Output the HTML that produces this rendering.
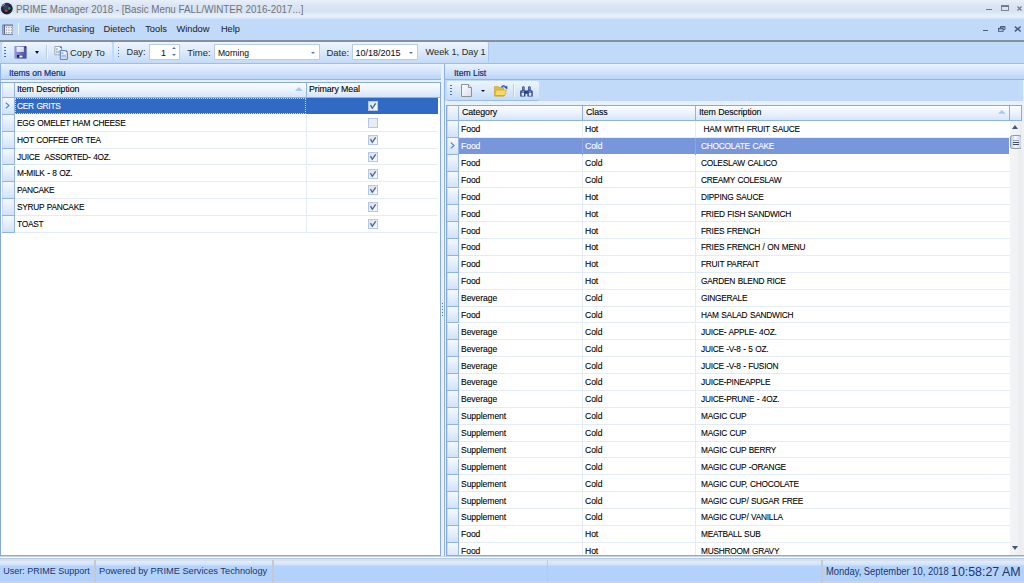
<!DOCTYPE html>
<html><head><meta charset="utf-8"><style>
*{box-sizing:border-box;margin:0;padding:0}
html,body{width:1024px;height:583px;overflow:hidden;background:#d5e4f7;font-family:"Liberation Sans",sans-serif;font-size:9px;color:#000}
.a{position:absolute}
.t{position:absolute;white-space:pre;line-height:1}
.grid .a,.grid .t,.grid .gh,.grid .rh,.grid .row{position:absolute}
#title{left:0;top:0;width:1024px;height:18px;background:linear-gradient(#e7eff9,#dbe6f4 30%,#d6e2f3 60%,#e2ecf8 80%,#e9f1fb 94%,#d4e6fb)}
#menu{left:0;top:18px;width:1024px;height:22px;background:#c1daf9;border-top:1px solid #d3e5fb}
#dark{left:0;top:40px;width:1024px;height:1.6px;background:#86909c}
#tstrip{left:0;top:41.6px;width:1024px;height:21.4px;background:#c1daf9}
.tb{background:linear-gradient(#eef5fe,#dae9fb 50%,#c3dbf8);border-bottom:1px solid #9dbde8;border-radius:2px}
.grip{position:absolute;width:1.5px;height:11.5px;background:repeating-linear-gradient(#3f72c2 0 1.4px,transparent 1.4px 3px)}
.sep{position:absolute;width:2px;border-left:1px solid #b7cde9;border-right:1px solid #f4f8fd}
.ph{background:linear-gradient(#e9f2fd,#d6e6fb 45%,#bad5f7);border-bottom:1px solid #93b5e3}
.grid{background:#fff;border:1px solid #86aadd;overflow:hidden}
.gh{background:linear-gradient(#fcfdff,#ebf3fd 50%,#d5e5fa);border-bottom:1px solid #8fb2e2}
.rh{background:linear-gradient(#f5f9fe,#e3eefb 50%,#d1e2f8);border-right:1px solid #93b6e6;box-shadow:inset 1px 0 0 #c9dcf5}
.row{height:16.84px;border-bottom:1px solid #e2ebf8}
.grid .t{font-size:9.8px;-webkit-text-stroke:0.1px currentColor}
.caps{letter-spacing:-0.3px;word-spacing:0.6px;transform:scaleX(0.85);transform-origin:0 0}
.mx{letter-spacing:-0.1px;transform:scaleX(0.88);transform-origin:0 0}

.s{-webkit-text-stroke:0.05px currentColor}
.phs{transform:scaleX(0.91);transform-origin:0 0;-webkit-text-stroke:0.2px currentColor}
.mc{transform:scaleX(0.88)}
.hd{transform:scaleX(0.9)}

</style></head><body>

<div id="title" class="a"></div>
<svg class="a" style="left:0;top:2px" width="14" height="14" viewBox="0 0 14 14">
<defs><radialGradient id="gb" cx="0.4" cy="0.35" r="0.7"><stop offset="0" stop-color="#3a4a78"/><stop offset="0.7" stop-color="#151b33"/><stop offset="1" stop-color="#2a3048"/></radialGradient></defs>
<circle cx="6.8" cy="6.6" r="5.9" fill="url(#gb)"/>
<path d="M2.6 4.2 A5 5 0 0 1 5 1.8" stroke="#c9d3ea" stroke-width="1" fill="none" opacity="0.8"/>
<circle cx="6.2" cy="8.6" r="1.5" fill="#c0302a"/><circle cx="9.3" cy="6.4" r="1.3" fill="#2f9a3a"/></svg>
<div class="t" style="left:15.7px;top:4.9px;font-size:10.3px;color:#6f747c;transform:scaleX(0.953);transform-origin:0 0">PRIME Manager 2018 - [Basic Menu FALL/WINTER 2016-2017...]</div>
<div class="a" style="left:986px;top:9px;width:6px;height:1.3px;background:#6f7b8a"></div>
<svg class="a" style="left:1000.5px;top:5.3px" width="8" height="6" viewBox="0 0 8 6"><rect x="0.5" y="0.5" width="7" height="5" fill="none" stroke="#707b88" stroke-width="0.9"/><rect x="0.5" y="0.5" width="7" height="1.5" fill="#707b88"/></svg>
<svg class="a" style="left:1016.5px;top:6px" width="5" height="5" viewBox="0 0 5 5"><path d="M0.5 0.5L4.5 4.5M4.5 0.5L0.5 4.5" stroke="#707b88" stroke-width="1.2"/></svg>
<div id="menu" class="a"></div>
<svg class="a" style="left:1.8px;top:24px" width="11.5" height="11" viewBox="0 0 11.5 11">
<rect x="0.4" y="0.5" width="10.8" height="10.2" rx="0.6" fill="#566b8e"/>
<rect x="1.1" y="1.4" width="0.9" height="8.6" fill="#a7b6cc"/>
<rect x="3" y="1.6" width="7.5" height="8.4" fill="#f3f3f1"/>
<rect x="3" y="1.3" width="7.5" height="0.9" fill="#7d8faa"/>
<g stroke="#dfe2e6" stroke-width="0.5"><path d="M3 3.45H10.5M3 6.05H10.5M3 8.75H10.5M4.45 2.2V10M6.95 2.2V10M9.55 2.2V10"/></g>
<g fill="#777"><rect x="4.0" y="3.0" width="0.9" height="0.9"/><rect x="6.5" y="3.0" width="0.9" height="0.9"/><rect x="9.1" y="3.0" width="0.9" height="0.9"/><rect x="4.0" y="5.6" width="0.9" height="0.9"/><rect x="6.5" y="5.6" width="0.9" height="0.9"/><rect x="9.1" y="5.6" width="0.9" height="0.9"/><rect x="4.0" y="8.3" width="0.9" height="0.9"/><rect x="6.5" y="8.3" width="0.9" height="0.9"/><rect x="9.1" y="8.3" width="0.9" height="0.9"/></g></svg>
<div class="a" style="left:18px;top:23px;width:1px;height:12px;background:#eef5fe"></div>
<div class="t s" style="left:24.7px;top:24.8px;font-size:9.3px;color:#262626">File</div>
<div class="t s" style="left:47.8px;top:24.8px;font-size:9.3px;color:#262626">Purchasing</div>
<div class="t s" style="left:103.6px;top:24.8px;font-size:9.3px;color:#262626">Dietech</div>
<div class="t s" style="left:145.2px;top:24.8px;font-size:9.3px;color:#262626">Tools</div>
<div class="t s" style="left:176.4px;top:24.8px;font-size:9.3px;color:#262626">Window</div>
<div class="t s" style="left:220.9px;top:24.8px;font-size:9.3px;color:#262626">Help</div>
<div class="a" style="left:983px;top:29.5px;width:5px;height:1.6px;background:#4a5d80"></div>
<svg class="a" style="left:998px;top:25.8px" width="7.5" height="5.8" viewBox="0 0 7.5 5.8"><path d="M2.5 2V0.5H7V3.5H5.3" fill="none" stroke="#4a5d80" stroke-width="1"/><rect x="2.5" y="0.4" width="4.6" height="1.1" fill="#4a5d80"/><rect x="0.5" y="2.3" width="4.6" height="3" fill="#c1daf9" stroke="#4a5d80" stroke-width="1"/><rect x="0.5" y="2.2" width="4.6" height="1.1" fill="#4a5d80"/></svg>
<svg class="a" style="left:1013.5px;top:25.5px" width="7.5" height="6" viewBox="0 0 7.5 6"><path d="M0.8 0.6L6.7 5.4M6.7 0.6L0.8 5.4" stroke="#4a5d80" stroke-width="1.5"/></svg>
<div id="dark" class="a"></div>
<div id="tstrip" class="a"></div>
<div class="a" style="left:0;top:63px;width:1024px;height:1px;background:#9dbde8"></div>
<div class="a tb" style="left:2px;top:42px;width:110px;height:21px;border-bottom:none"></div>
<div class="grip" style="left:4px;top:46.8px"></div>
<svg class="a" style="left:14px;top:45.8px" width="13" height="13" viewBox="0 0 13 13">
<defs><linearGradient id="fl" x1="0" y1="0" x2="1" y2="0"><stop offset="0" stop-color="#9a9de0"/><stop offset="0.5" stop-color="#6a6cc4"/><stop offset="1" stop-color="#4a4aa6"/></linearGradient>
<linearGradient id="lb" x1="0" y1="0" x2="1" y2="1"><stop offset="0" stop-color="#ffffff"/><stop offset="1" stop-color="#c9cbd6"/></linearGradient></defs>
<rect x="0.3" y="0" width="12.3" height="12.7" rx="0.8" fill="url(#fl)"/>
<rect x="2.6" y="0.7" width="7.3" height="5.3" fill="url(#lb)"/>
<rect x="11" y="0.8" width="1" height="1" fill="#222"/>
<rect x="3" y="9" width="6.3" height="2.8" fill="#34346e"/><rect x="5.3" y="9.5" width="3.3" height="2" fill="#eceef4"/><rect x="3.4" y="9.3" width="1.2" height="1.3" fill="#000"/></svg>
<div class="a" style="left:35px;top:51px;width:0;height:0;border-left:2.5px solid transparent;border-right:2.5px solid transparent;border-top:3px solid #111"></div>
<div class="sep" style="left:46px;top:45px;height:14px"></div>
<svg class="a" style="left:53.5px;top:45.5px" width="14" height="14" viewBox="0 0 14 14">
<path d="M0.8 0.5H5.6L7.6 2.5V8.8H0.8Z" fill="#f4f5f8" stroke="#9ca3ae" stroke-width="0.9"/>
<path d="M5.4 0.5L7.6 2.7V0.5Z" fill="#3c4a60"/>
<rect x="1.8" y="2.6" width="1.8" height="0.9" fill="#4a78c8"/><rect x="1.8" y="4.6" width="4.6" height="2.8" fill="#b9c6da"/>
<path d="M6.3 4.6H11.4L13.3 6.5V13.3H6.3Z" fill="#f2f6fd" stroke="#4d78bd" stroke-width="1"/>
<path d="M11.2 4.6L13.3 6.7V4.6Z" fill="#3f6ab8"/>
<rect x="7.4" y="6.6" width="2" height="0.9" fill="#4a78c8"/><rect x="7.4" y="8.7" width="4.8" height="2.9" fill="#a9c0e6"/></svg>
<div class="t" style="left:70px;top:47.8px;font-size:9.5px;color:#2a2a2a">Copy To</div>
<div class="a tb" style="left:114px;top:42px;width:375px;height:21px;border-bottom:none;border-right:1px solid #a9c6ec"></div>
<div class="grip" style="left:117.5px;top:46.8px"></div>
<div class="t s" style="left:126.6px;top:47.8px;font-size:9.2px;color:#2e2e2e">Day:</div>
<div class="a" style="left:148.5px;top:44px;width:31.5px;height:16px;background:#fff;border:1px solid #b9cde8"></div>
<div class="t s" style="left:161px;top:48.5px;font-size:9px;color:#111">1</div>
<div class="a" style="left:172px;top:46.8px;width:0;height:0;border-left:2.2px solid transparent;border-right:2.2px solid transparent;border-bottom:2.6px solid #4c7cc2"></div>
<div class="a" style="left:172px;top:54px;width:0;height:0;border-left:2.2px solid transparent;border-right:2.2px solid transparent;border-top:2.6px solid #4c7cc2"></div>
<div class="t s" style="left:187.3px;top:47.8px;font-size:9.5px;color:#2e2e2e">Time:</div>
<div class="a" style="left:214px;top:44px;width:105.5px;height:16px;background:#fff;border:1px solid #b9cde8"></div>
<div class="t s" style="left:217.8px;top:48.6px;font-size:9px;color:#111;transform:scaleX(0.95);transform-origin:0 0">Morning</div>
<div class="a" style="left:311.3px;top:51.5px;width:0;height:0;border-left:2.3px solid transparent;border-right:2.3px solid transparent;border-top:2.6px solid #4c7cc2"></div>
<div class="t s" style="left:326.4px;top:47.8px;font-size:9.5px;color:#2e2e2e">Date:</div>
<div class="a" style="left:352px;top:44px;width:65.5px;height:16px;background:#fff;border:1px solid #b9cde8"></div>
<div class="t s" style="left:355.5px;top:48.6px;font-size:9px;color:#111">10/18/2015</div>
<div class="a" style="left:409.3px;top:51.5px;width:0;height:0;border-left:2.3px solid transparent;border-right:2.3px solid transparent;border-top:2.6px solid #4c7cc2"></div>
<div class="t s" style="left:425.6px;top:47.8px;font-size:9.2px;color:#2e2e2e">Week 1, Day 1</div>
<div class="a" style="left:0;top:64px;width:441px;height:493px;border-left:1px solid #8fb2e2;background:#e8f0fb"></div>
<div class="a ph" style="left:1px;top:64px;width:440px;height:16px"></div>
<div class="t phs" style="left:9.3px;top:67.6px;font-size:9.4px;color:#10297a">Items on Menu</div>
<div class="a grid" style="left:0;top:82px;width:441px;height:474px">
<div class="a" style="left:1px;top:0;width:438px;height:472px">
<div class="gh" style="left:0;top:0;width:438px;height:15px"></div>
<div class="rh" style="left:0;top:0;width:13px;height:15px;background:linear-gradient(#f5f9fe,#dae7f8);border-bottom:1px solid #8fb2e2"></div>
<div class="a" style="left:303.8px;top:0;width:1px;height:15px;background:#8fb2e2"></div>
<div class="t mx hd" style="left:15.3px;top:0.6px;color:#000">Item Description</div>
<svg class="a" style="left:293.4px;top:3.9px" width="8" height="4" viewBox="0 0 8 4"><path d="M0 4L3.9 0L7.8 4Z" fill="#a2cbf6"/></svg>
<div class="t mx hd" style="left:306.6px;top:0.6px;color:#000">Primary Meal</div>
<div class="rh" style="left:0;top:15.00px;width:13px;height:16.88px;border-bottom:1px solid #8fb3e4"></div>
<div class="a" style="left:13px;top:15.00px;width:423px;height:16.07px;background:#316ac5"></div>
<div class="a" style="left:13px;top:15.00px;width:291px;height:16.07px;border:1px dotted #c8d8f0"></div>
<svg class="a" style="left:3.4px;top:18.90px" width="5" height="7" viewBox="0 0 5 7"><path d="M0.8 0.6L4 3.5L0.8 6.4" stroke="#4b86d6" stroke-width="1.2" fill="none"/></svg>
<div class="t caps" style="left:14.8px;top:17.90px;color:#fff">CER GRITS</div>
<svg class="a" style="left:366px;top:18.00px" width="10" height="10" viewBox="0 0 10 10"><defs><linearGradient id="cbg" x1="0" y1="0" x2="1" y2="1"><stop offset="0" stop-color="#d9dfe7"/><stop offset="1" stop-color="#fbfcfd"/></linearGradient></defs><rect x="0.5" y="0.5" width="9" height="9" fill="url(#cbg)" stroke="#b3c8e6"/><path d="M2.5 4.2L4.3 7.3L7.7 2.4" stroke="#4668a6" stroke-width="1.4" fill="none"/></svg>
<div class="rh" style="left:0;top:31.88px;width:13px;height:16.88px;border-bottom:1px solid #8fb3e4"></div>
<div class="row" style="left:13px;top:31.88px;width:423px"></div>
<div class="a" style="left:303.8px;top:31.88px;width:1px;height:16.88px;background:#e2ebf8"></div>
<div class="t caps" style="left:14.8px;top:34.77px;color:#000">EGG OMELET HAM CHEESE</div>
<svg class="a" style="left:366px;top:34.88px" width="10" height="10" viewBox="0 0 10 10"><rect x="0.5" y="0.5" width="9" height="9" fill="#e9ecf0" stroke="#b3c8e6"/></svg>
<div class="rh" style="left:0;top:48.75px;width:13px;height:16.88px;border-bottom:1px solid #8fb3e4"></div>
<div class="row" style="left:13px;top:48.75px;width:423px"></div>
<div class="a" style="left:303.8px;top:48.75px;width:1px;height:16.88px;background:#e2ebf8"></div>
<div class="t caps" style="left:14.8px;top:51.65px;color:#000">HOT COFFEE OR TEA</div>
<svg class="a" style="left:366px;top:51.75px" width="10" height="10" viewBox="0 0 10 10"><defs><linearGradient id="cbg" x1="0" y1="0" x2="1" y2="1"><stop offset="0" stop-color="#d9dfe7"/><stop offset="1" stop-color="#fbfcfd"/></linearGradient></defs><rect x="0.5" y="0.5" width="9" height="9" fill="url(#cbg)" stroke="#b3c8e6"/><path d="M2.5 4.2L4.3 7.3L7.7 2.4" stroke="#4668a6" stroke-width="1.4" fill="none"/></svg>
<div class="rh" style="left:0;top:65.62px;width:13px;height:16.88px;border-bottom:1px solid #8fb3e4"></div>
<div class="row" style="left:13px;top:65.62px;width:423px"></div>
<div class="a" style="left:303.8px;top:65.62px;width:1px;height:16.88px;background:#e2ebf8"></div>
<div class="t caps" style="left:14.8px;top:68.53px;color:#000">JUICE  ASSORTED- 4OZ.</div>
<svg class="a" style="left:366px;top:68.62px" width="10" height="10" viewBox="0 0 10 10"><defs><linearGradient id="cbg" x1="0" y1="0" x2="1" y2="1"><stop offset="0" stop-color="#d9dfe7"/><stop offset="1" stop-color="#fbfcfd"/></linearGradient></defs><rect x="0.5" y="0.5" width="9" height="9" fill="url(#cbg)" stroke="#b3c8e6"/><path d="M2.5 4.2L4.3 7.3L7.7 2.4" stroke="#4668a6" stroke-width="1.4" fill="none"/></svg>
<div class="rh" style="left:0;top:82.50px;width:13px;height:16.88px;border-bottom:1px solid #8fb3e4"></div>
<div class="row" style="left:13px;top:82.50px;width:423px"></div>
<div class="a" style="left:303.8px;top:82.50px;width:1px;height:16.88px;background:#e2ebf8"></div>
<div class="t caps" style="left:14.8px;top:85.40px;color:#000">M-MILK - 8 OZ.</div>
<svg class="a" style="left:366px;top:85.50px" width="10" height="10" viewBox="0 0 10 10"><defs><linearGradient id="cbg" x1="0" y1="0" x2="1" y2="1"><stop offset="0" stop-color="#d9dfe7"/><stop offset="1" stop-color="#fbfcfd"/></linearGradient></defs><rect x="0.5" y="0.5" width="9" height="9" fill="url(#cbg)" stroke="#b3c8e6"/><path d="M2.5 4.2L4.3 7.3L7.7 2.4" stroke="#4668a6" stroke-width="1.4" fill="none"/></svg>
<div class="rh" style="left:0;top:99.38px;width:13px;height:16.88px;border-bottom:1px solid #8fb3e4"></div>
<div class="row" style="left:13px;top:99.38px;width:423px"></div>
<div class="a" style="left:303.8px;top:99.38px;width:1px;height:16.88px;background:#e2ebf8"></div>
<div class="t caps" style="left:14.8px;top:102.28px;color:#000">PANCAKE</div>
<svg class="a" style="left:366px;top:102.38px" width="10" height="10" viewBox="0 0 10 10"><defs><linearGradient id="cbg" x1="0" y1="0" x2="1" y2="1"><stop offset="0" stop-color="#d9dfe7"/><stop offset="1" stop-color="#fbfcfd"/></linearGradient></defs><rect x="0.5" y="0.5" width="9" height="9" fill="url(#cbg)" stroke="#b3c8e6"/><path d="M2.5 4.2L4.3 7.3L7.7 2.4" stroke="#4668a6" stroke-width="1.4" fill="none"/></svg>
<div class="rh" style="left:0;top:116.25px;width:13px;height:16.88px;border-bottom:1px solid #8fb3e4"></div>
<div class="row" style="left:13px;top:116.25px;width:423px"></div>
<div class="a" style="left:303.8px;top:116.25px;width:1px;height:16.88px;background:#e2ebf8"></div>
<div class="t caps" style="left:14.8px;top:119.15px;color:#000">SYRUP PANCAKE</div>
<svg class="a" style="left:366px;top:119.25px" width="10" height="10" viewBox="0 0 10 10"><defs><linearGradient id="cbg" x1="0" y1="0" x2="1" y2="1"><stop offset="0" stop-color="#d9dfe7"/><stop offset="1" stop-color="#fbfcfd"/></linearGradient></defs><rect x="0.5" y="0.5" width="9" height="9" fill="url(#cbg)" stroke="#b3c8e6"/><path d="M2.5 4.2L4.3 7.3L7.7 2.4" stroke="#4668a6" stroke-width="1.4" fill="none"/></svg>
<div class="rh" style="left:0;top:133.12px;width:13px;height:16.88px;border-bottom:1px solid #8fb3e4"></div>
<div class="row" style="left:13px;top:133.12px;width:423px"></div>
<div class="a" style="left:303.8px;top:133.12px;width:1px;height:16.88px;background:#e2ebf8"></div>
<div class="t caps" style="left:14.8px;top:136.03px;color:#000">TOAST</div>
<svg class="a" style="left:366px;top:136.12px" width="10" height="10" viewBox="0 0 10 10"><defs><linearGradient id="cbg" x1="0" y1="0" x2="1" y2="1"><stop offset="0" stop-color="#d9dfe7"/><stop offset="1" stop-color="#fbfcfd"/></linearGradient></defs><rect x="0.5" y="0.5" width="9" height="9" fill="url(#cbg)" stroke="#b3c8e6"/><path d="M2.5 4.2L4.3 7.3L7.7 2.4" stroke="#4668a6" stroke-width="1.4" fill="none"/></svg>
</div>
</div>
<div class="a" style="left:444px;top:64px;width:580px;height:493px;border-left:1px solid #8fb2e2;background:#e8f0fb"></div>
<div class="a ph" style="left:445px;top:64px;width:579px;height:16px"></div>
<div class="t phs" style="left:453.6px;top:67.6px;font-size:9.4px;color:#10297a">Item List</div>
<div class="a" style="left:445px;top:80px;width:578px;height:21px;background:#c1daf9"></div>
<div class="a tb" style="left:447px;top:81px;width:92px;height:20px"></div>
<div class="grip" style="left:450.2px;top:85.3px"></div>
<svg class="a" style="left:461px;top:84px" width="11" height="13" viewBox="0 0 11 13"><defs><linearGradient id="pg" x1="0" y1="0" x2="1" y2="1"><stop offset="0" stop-color="#ffffff"/><stop offset="1" stop-color="#d9dde5"/></linearGradient></defs><path d="M0.5 0.5H7.5L10.5 3.5V12.5H0.5Z" fill="url(#pg)" stroke="#8a929e"/><path d="M7.5 0.5V3.5H10.5" fill="#e8ebf0" stroke="#8a929e"/></svg>
<div class="a" style="left:481px;top:89.5px;width:0;height:0;border-left:2.3px solid transparent;border-right:2.3px solid transparent;border-top:2.8px solid #111"></div>
<svg class="a" style="left:493.5px;top:84.5px" width="14" height="12" viewBox="0 0 14 12">
<path d="M0.5 1.6H4.2L5 2.6H9.6V11H0.5Z" fill="#e3bd3c" stroke="#c89b2a" stroke-width="0.6"/>
<path d="M2.2 5H12.6L10.4 11H0.6Z" fill="#f6d865" stroke="#cf9e22" stroke-width="0.6"/>
<path d="M1 10.3H10.6L10.3 11H0.8Z" fill="#d29d1c"/>
<path d="M7.6 2.4Q8.8 0 11.6 1.6" stroke="#2456b8" stroke-width="1.3" fill="none"/>
<path d="M10.2 2.8L13.4 4.2L13.2 0.6Z" fill="#2456b8"/></svg>
<div class="sep" style="left:513px;top:84px;height:13px"></div>
<svg class="a" style="left:520px;top:85.6px" width="13" height="11" viewBox="0 0 13 11">
<g fill="#223f8a"><path d="M2.2 4.4V1.5Q2.2 0.3 3.3 0.3Q4.6 0.3 4.6 1.5V4.4Z"/><path d="M8.2 4.4V1.5Q8.2 0.3 9.4 0.3Q10.7 0.3 10.7 1.5V4.4Z"/>
<path d="M0.2 10.6V5.6Q0.2 4.2 1.6 4.2H5.4V10.6Z"/><path d="M7.4 4.2H11.2Q12.7 4.2 12.7 5.6V10.6H7.4Z"/><rect x="5" y="4.6" width="2.8" height="3.2"/></g>
<g fill="#dfe8f6"><rect x="1.5" y="6.6" width="2.6" height="3.2"/><rect x="8.8" y="6.6" width="2.6" height="3.2"/></g>
<g fill="#8aa6da"><rect x="2.9" y="1.2" width="0.8" height="2.4"/><rect x="9" y="1.2" width="0.8" height="2.4"/><rect x="1.6" y="4.9" width="2.8" height="0.8"/><rect x="8.6" y="4.9" width="2.8" height="0.8"/></g></svg>
<div class="a grid" style="left:446px;top:105px;width:576px;height:451px">
<div class="gh" style="left:0;top:0;width:574px;height:15px"></div>
<div class="rh" style="left:0;top:0;width:12px;height:15px;background:linear-gradient(#f5f9fe,#dae7f8);border-bottom:1px solid #8fb2e2"></div>
<div class="a" style="left:135.2px;top:0;width:1px;height:15px;background:#8fb2e2"></div>
<div class="a" style="left:248.2px;top:0;width:1px;height:15px;background:#8fb2e2"></div>
<div class="a" style="left:562.2px;top:0;width:1px;height:15px;background:#8fb2e2"></div>
<div class="t mx hd" style="left:14.6px;top:1.1px;color:#000">Category</div>
<div class="t mx hd" style="left:138.6px;top:1.1px;color:#000">Class</div>
<div class="t mx hd" style="left:251.8px;top:1.1px;color:#000">Item Description</div>
<svg class="a" style="left:551px;top:4.3px" width="8" height="4" viewBox="0 0 8 4"><path d="M0 3.8L3.9 0L7.8 3.8Z" fill="#a2cbf6"/></svg>
<div class="rh" style="left:0;top:15.00px;width:12px;height:16.88px;border-bottom:1px solid #8fb3e4"></div>
<div class="row" style="left:12px;top:15.00px;width:551px"></div>
<div class="a" style="left:135.2px;top:15.00px;width:1px;height:16.88px;background:#e2ebf8"></div>
<div class="a" style="left:248.2px;top:15.00px;width:1px;height:16.88px;background:#e2ebf8"></div>
<div class="t mx mc" style="left:14.3px;top:18.30px;color:#000">Food</div>
<div class="t mx mc" style="left:138.3px;top:18.30px;color:#000">Hot</div>
<div class="t caps" style="left:254px;top:18.30px;color:#000"> HAM WITH FRUIT SAUCE</div>
<div class="rh" style="left:0;top:31.88px;width:12px;height:16.88px;border-bottom:1px solid #8fb3e4"></div>
<div class="a" style="left:12px;top:31.88px;width:550.2px;height:16.07px;background:#7896dc"></div>
<svg class="a" style="left:3.2px;top:35.77px" width="5" height="7" viewBox="0 0 5 7"><path d="M0.8 0.6L4 3.5L0.8 6.4" stroke="#4b86d6" stroke-width="1.2" fill="none"/></svg>
<div class="a" style="left:135.2px;top:31.88px;width:1px;height:16.88px;background:#8aa5e2"></div>
<div class="a" style="left:248.2px;top:31.88px;width:1px;height:16.88px;background:#8aa5e2"></div>
<div class="t mx mc" style="left:14.3px;top:35.17px;color:#fff">Food</div>
<div class="t mx mc" style="left:138.3px;top:35.17px;color:#fff">Cold</div>
<div class="t caps" style="left:254px;top:35.17px;color:#fff">CHOCOLATE CAKE</div>
<div class="rh" style="left:0;top:48.75px;width:12px;height:16.88px;border-bottom:1px solid #8fb3e4"></div>
<div class="row" style="left:12px;top:48.75px;width:551px"></div>
<div class="a" style="left:135.2px;top:48.75px;width:1px;height:16.88px;background:#e2ebf8"></div>
<div class="a" style="left:248.2px;top:48.75px;width:1px;height:16.88px;background:#e2ebf8"></div>
<div class="t mx mc" style="left:14.3px;top:52.05px;color:#000">Food</div>
<div class="t mx mc" style="left:138.3px;top:52.05px;color:#000">Cold</div>
<div class="t caps" style="left:254px;top:52.05px;color:#000">COLESLAW CALICO</div>
<div class="rh" style="left:0;top:65.62px;width:12px;height:16.88px;border-bottom:1px solid #8fb3e4"></div>
<div class="row" style="left:12px;top:65.62px;width:551px"></div>
<div class="a" style="left:135.2px;top:65.62px;width:1px;height:16.88px;background:#e2ebf8"></div>
<div class="a" style="left:248.2px;top:65.62px;width:1px;height:16.88px;background:#e2ebf8"></div>
<div class="t mx mc" style="left:14.3px;top:68.92px;color:#000">Food</div>
<div class="t mx mc" style="left:138.3px;top:68.92px;color:#000">Cold</div>
<div class="t caps" style="left:254px;top:68.92px;color:#000">CREAMY COLESLAW</div>
<div class="rh" style="left:0;top:82.50px;width:12px;height:16.88px;border-bottom:1px solid #8fb3e4"></div>
<div class="row" style="left:12px;top:82.50px;width:551px"></div>
<div class="a" style="left:135.2px;top:82.50px;width:1px;height:16.88px;background:#e2ebf8"></div>
<div class="a" style="left:248.2px;top:82.50px;width:1px;height:16.88px;background:#e2ebf8"></div>
<div class="t mx mc" style="left:14.3px;top:85.80px;color:#000">Food</div>
<div class="t mx mc" style="left:138.3px;top:85.80px;color:#000">Hot</div>
<div class="t caps" style="left:254px;top:85.80px;color:#000">DIPPING SAUCE</div>
<div class="rh" style="left:0;top:99.38px;width:12px;height:16.88px;border-bottom:1px solid #8fb3e4"></div>
<div class="row" style="left:12px;top:99.38px;width:551px"></div>
<div class="a" style="left:135.2px;top:99.38px;width:1px;height:16.88px;background:#e2ebf8"></div>
<div class="a" style="left:248.2px;top:99.38px;width:1px;height:16.88px;background:#e2ebf8"></div>
<div class="t mx mc" style="left:14.3px;top:102.67px;color:#000">Food</div>
<div class="t mx mc" style="left:138.3px;top:102.67px;color:#000">Hot</div>
<div class="t caps" style="left:254px;top:102.67px;color:#000">FRIED FISH SANDWICH</div>
<div class="rh" style="left:0;top:116.25px;width:12px;height:16.88px;border-bottom:1px solid #8fb3e4"></div>
<div class="row" style="left:12px;top:116.25px;width:551px"></div>
<div class="a" style="left:135.2px;top:116.25px;width:1px;height:16.88px;background:#e2ebf8"></div>
<div class="a" style="left:248.2px;top:116.25px;width:1px;height:16.88px;background:#e2ebf8"></div>
<div class="t mx mc" style="left:14.3px;top:119.55px;color:#000">Food</div>
<div class="t mx mc" style="left:138.3px;top:119.55px;color:#000">Hot</div>
<div class="t caps" style="left:254px;top:119.55px;color:#000">FRIES FRENCH</div>
<div class="rh" style="left:0;top:133.12px;width:12px;height:16.88px;border-bottom:1px solid #8fb3e4"></div>
<div class="row" style="left:12px;top:133.12px;width:551px"></div>
<div class="a" style="left:135.2px;top:133.12px;width:1px;height:16.88px;background:#e2ebf8"></div>
<div class="a" style="left:248.2px;top:133.12px;width:1px;height:16.88px;background:#e2ebf8"></div>
<div class="t mx mc" style="left:14.3px;top:136.43px;color:#000">Food</div>
<div class="t mx mc" style="left:138.3px;top:136.43px;color:#000">Hot</div>
<div class="t caps" style="left:254px;top:136.43px;color:#000">FRIES FRENCH / ON MENU</div>
<div class="rh" style="left:0;top:150.00px;width:12px;height:16.88px;border-bottom:1px solid #8fb3e4"></div>
<div class="row" style="left:12px;top:150.00px;width:551px"></div>
<div class="a" style="left:135.2px;top:150.00px;width:1px;height:16.88px;background:#e2ebf8"></div>
<div class="a" style="left:248.2px;top:150.00px;width:1px;height:16.88px;background:#e2ebf8"></div>
<div class="t mx mc" style="left:14.3px;top:153.30px;color:#000">Food</div>
<div class="t mx mc" style="left:138.3px;top:153.30px;color:#000">Hot</div>
<div class="t caps" style="left:254px;top:153.30px;color:#000">FRUIT PARFAIT</div>
<div class="rh" style="left:0;top:166.88px;width:12px;height:16.88px;border-bottom:1px solid #8fb3e4"></div>
<div class="row" style="left:12px;top:166.88px;width:551px"></div>
<div class="a" style="left:135.2px;top:166.88px;width:1px;height:16.88px;background:#e2ebf8"></div>
<div class="a" style="left:248.2px;top:166.88px;width:1px;height:16.88px;background:#e2ebf8"></div>
<div class="t mx mc" style="left:14.3px;top:170.18px;color:#000">Food</div>
<div class="t mx mc" style="left:138.3px;top:170.18px;color:#000">Hot</div>
<div class="t caps" style="left:254px;top:170.18px;color:#000">GARDEN BLEND RICE</div>
<div class="rh" style="left:0;top:183.75px;width:12px;height:16.88px;border-bottom:1px solid #8fb3e4"></div>
<div class="row" style="left:12px;top:183.75px;width:551px"></div>
<div class="a" style="left:135.2px;top:183.75px;width:1px;height:16.88px;background:#e2ebf8"></div>
<div class="a" style="left:248.2px;top:183.75px;width:1px;height:16.88px;background:#e2ebf8"></div>
<div class="t mx mc" style="left:14.3px;top:187.05px;color:#000">Beverage</div>
<div class="t mx mc" style="left:138.3px;top:187.05px;color:#000">Cold</div>
<div class="t caps" style="left:254px;top:187.05px;color:#000">GINGERALE</div>
<div class="rh" style="left:0;top:200.62px;width:12px;height:16.88px;border-bottom:1px solid #8fb3e4"></div>
<div class="row" style="left:12px;top:200.62px;width:551px"></div>
<div class="a" style="left:135.2px;top:200.62px;width:1px;height:16.88px;background:#e2ebf8"></div>
<div class="a" style="left:248.2px;top:200.62px;width:1px;height:16.88px;background:#e2ebf8"></div>
<div class="t mx mc" style="left:14.3px;top:203.93px;color:#000">Food</div>
<div class="t mx mc" style="left:138.3px;top:203.93px;color:#000">Cold</div>
<div class="t caps" style="left:254px;top:203.93px;color:#000">HAM SALAD SANDWICH</div>
<div class="rh" style="left:0;top:217.50px;width:12px;height:16.88px;border-bottom:1px solid #8fb3e4"></div>
<div class="row" style="left:12px;top:217.50px;width:551px"></div>
<div class="a" style="left:135.2px;top:217.50px;width:1px;height:16.88px;background:#e2ebf8"></div>
<div class="a" style="left:248.2px;top:217.50px;width:1px;height:16.88px;background:#e2ebf8"></div>
<div class="t mx mc" style="left:14.3px;top:220.80px;color:#000">Beverage</div>
<div class="t mx mc" style="left:138.3px;top:220.80px;color:#000">Cold</div>
<div class="t caps" style="left:254px;top:220.80px;color:#000">JUICE- APPLE- 4OZ.</div>
<div class="rh" style="left:0;top:234.38px;width:12px;height:16.88px;border-bottom:1px solid #8fb3e4"></div>
<div class="row" style="left:12px;top:234.38px;width:551px"></div>
<div class="a" style="left:135.2px;top:234.38px;width:1px;height:16.88px;background:#e2ebf8"></div>
<div class="a" style="left:248.2px;top:234.38px;width:1px;height:16.88px;background:#e2ebf8"></div>
<div class="t mx mc" style="left:14.3px;top:237.68px;color:#000">Beverage</div>
<div class="t mx mc" style="left:138.3px;top:237.68px;color:#000">Cold</div>
<div class="t caps" style="left:254px;top:237.68px;color:#000">JUICE -V-8 - 5 OZ.</div>
<div class="rh" style="left:0;top:251.25px;width:12px;height:16.88px;border-bottom:1px solid #8fb3e4"></div>
<div class="row" style="left:12px;top:251.25px;width:551px"></div>
<div class="a" style="left:135.2px;top:251.25px;width:1px;height:16.88px;background:#e2ebf8"></div>
<div class="a" style="left:248.2px;top:251.25px;width:1px;height:16.88px;background:#e2ebf8"></div>
<div class="t mx mc" style="left:14.3px;top:254.55px;color:#000">Beverage</div>
<div class="t mx mc" style="left:138.3px;top:254.55px;color:#000">Cold</div>
<div class="t caps" style="left:254px;top:254.55px;color:#000">JUICE -V-8 - FUSION</div>
<div class="rh" style="left:0;top:268.12px;width:12px;height:16.88px;border-bottom:1px solid #8fb3e4"></div>
<div class="row" style="left:12px;top:268.12px;width:551px"></div>
<div class="a" style="left:135.2px;top:268.12px;width:1px;height:16.88px;background:#e2ebf8"></div>
<div class="a" style="left:248.2px;top:268.12px;width:1px;height:16.88px;background:#e2ebf8"></div>
<div class="t mx mc" style="left:14.3px;top:271.43px;color:#000">Beverage</div>
<div class="t mx mc" style="left:138.3px;top:271.43px;color:#000">Cold</div>
<div class="t caps" style="left:254px;top:271.43px;color:#000">JUICE-PINEAPPLE</div>
<div class="rh" style="left:0;top:285.00px;width:12px;height:16.88px;border-bottom:1px solid #8fb3e4"></div>
<div class="row" style="left:12px;top:285.00px;width:551px"></div>
<div class="a" style="left:135.2px;top:285.00px;width:1px;height:16.88px;background:#e2ebf8"></div>
<div class="a" style="left:248.2px;top:285.00px;width:1px;height:16.88px;background:#e2ebf8"></div>
<div class="t mx mc" style="left:14.3px;top:288.30px;color:#000">Beverage</div>
<div class="t mx mc" style="left:138.3px;top:288.30px;color:#000">Cold</div>
<div class="t caps" style="left:254px;top:288.30px;color:#000">JUICE-PRUNE - 4OZ.</div>
<div class="rh" style="left:0;top:301.88px;width:12px;height:16.88px;border-bottom:1px solid #8fb3e4"></div>
<div class="row" style="left:12px;top:301.88px;width:551px"></div>
<div class="a" style="left:135.2px;top:301.88px;width:1px;height:16.88px;background:#e2ebf8"></div>
<div class="a" style="left:248.2px;top:301.88px;width:1px;height:16.88px;background:#e2ebf8"></div>
<div class="t mx mc" style="left:14.3px;top:305.18px;color:#000">Supplement</div>
<div class="t mx mc" style="left:138.3px;top:305.18px;color:#000">Cold</div>
<div class="t caps" style="left:254px;top:305.18px;color:#000">MAGIC CUP</div>
<div class="rh" style="left:0;top:318.75px;width:12px;height:16.88px;border-bottom:1px solid #8fb3e4"></div>
<div class="row" style="left:12px;top:318.75px;width:551px"></div>
<div class="a" style="left:135.2px;top:318.75px;width:1px;height:16.88px;background:#e2ebf8"></div>
<div class="a" style="left:248.2px;top:318.75px;width:1px;height:16.88px;background:#e2ebf8"></div>
<div class="t mx mc" style="left:14.3px;top:322.05px;color:#000">Supplement</div>
<div class="t mx mc" style="left:138.3px;top:322.05px;color:#000">Cold</div>
<div class="t caps" style="left:254px;top:322.05px;color:#000">MAGIC CUP</div>
<div class="rh" style="left:0;top:335.62px;width:12px;height:16.88px;border-bottom:1px solid #8fb3e4"></div>
<div class="row" style="left:12px;top:335.62px;width:551px"></div>
<div class="a" style="left:135.2px;top:335.62px;width:1px;height:16.88px;background:#e2ebf8"></div>
<div class="a" style="left:248.2px;top:335.62px;width:1px;height:16.88px;background:#e2ebf8"></div>
<div class="t mx mc" style="left:14.3px;top:338.93px;color:#000">Supplement</div>
<div class="t mx mc" style="left:138.3px;top:338.93px;color:#000">Cold</div>
<div class="t caps" style="left:254px;top:338.93px;color:#000">MAGIC CUP BERRY</div>
<div class="rh" style="left:0;top:352.50px;width:12px;height:16.88px;border-bottom:1px solid #8fb3e4"></div>
<div class="row" style="left:12px;top:352.50px;width:551px"></div>
<div class="a" style="left:135.2px;top:352.50px;width:1px;height:16.88px;background:#e2ebf8"></div>
<div class="a" style="left:248.2px;top:352.50px;width:1px;height:16.88px;background:#e2ebf8"></div>
<div class="t mx mc" style="left:14.3px;top:355.80px;color:#000">Supplement</div>
<div class="t mx mc" style="left:138.3px;top:355.80px;color:#000">Cold</div>
<div class="t caps" style="left:254px;top:355.80px;color:#000">MAGIC CUP -ORANGE</div>
<div class="rh" style="left:0;top:369.38px;width:12px;height:16.88px;border-bottom:1px solid #8fb3e4"></div>
<div class="row" style="left:12px;top:369.38px;width:551px"></div>
<div class="a" style="left:135.2px;top:369.38px;width:1px;height:16.88px;background:#e2ebf8"></div>
<div class="a" style="left:248.2px;top:369.38px;width:1px;height:16.88px;background:#e2ebf8"></div>
<div class="t mx mc" style="left:14.3px;top:372.68px;color:#000">Supplement</div>
<div class="t mx mc" style="left:138.3px;top:372.68px;color:#000">Cold</div>
<div class="t caps" style="left:254px;top:372.68px;color:#000">MAGIC CUP, CHOCOLATE</div>
<div class="rh" style="left:0;top:386.25px;width:12px;height:16.88px;border-bottom:1px solid #8fb3e4"></div>
<div class="row" style="left:12px;top:386.25px;width:551px"></div>
<div class="a" style="left:135.2px;top:386.25px;width:1px;height:16.88px;background:#e2ebf8"></div>
<div class="a" style="left:248.2px;top:386.25px;width:1px;height:16.88px;background:#e2ebf8"></div>
<div class="t mx mc" style="left:14.3px;top:389.55px;color:#000">Supplement</div>
<div class="t mx mc" style="left:138.3px;top:389.55px;color:#000">Cold</div>
<div class="t caps" style="left:254px;top:389.55px;color:#000">MAGIC CUP/ SUGAR FREE</div>
<div class="rh" style="left:0;top:403.12px;width:12px;height:16.88px;border-bottom:1px solid #8fb3e4"></div>
<div class="row" style="left:12px;top:403.12px;width:551px"></div>
<div class="a" style="left:135.2px;top:403.12px;width:1px;height:16.88px;background:#e2ebf8"></div>
<div class="a" style="left:248.2px;top:403.12px;width:1px;height:16.88px;background:#e2ebf8"></div>
<div class="t mx mc" style="left:14.3px;top:406.43px;color:#000">Supplement</div>
<div class="t mx mc" style="left:138.3px;top:406.43px;color:#000">Cold</div>
<div class="t caps" style="left:254px;top:406.43px;color:#000">MAGIC CUP/ VANILLA</div>
<div class="rh" style="left:0;top:420.00px;width:12px;height:16.88px;border-bottom:1px solid #8fb3e4"></div>
<div class="row" style="left:12px;top:420.00px;width:551px"></div>
<div class="a" style="left:135.2px;top:420.00px;width:1px;height:16.88px;background:#e2ebf8"></div>
<div class="a" style="left:248.2px;top:420.00px;width:1px;height:16.88px;background:#e2ebf8"></div>
<div class="t mx mc" style="left:14.3px;top:423.30px;color:#000">Food</div>
<div class="t mx mc" style="left:138.3px;top:423.30px;color:#000">Hot</div>
<div class="t caps" style="left:254px;top:423.30px;color:#000">MEATBALL SUB</div>
<div class="rh" style="left:0;top:436.88px;width:12px;height:16.88px;border-bottom:1px solid #8fb3e4"></div>
<div class="row" style="left:12px;top:436.88px;width:551px"></div>
<div class="a" style="left:135.2px;top:436.88px;width:1px;height:16.88px;background:#e2ebf8"></div>
<div class="a" style="left:248.2px;top:436.88px;width:1px;height:16.88px;background:#e2ebf8"></div>
<div class="t mx mc" style="left:14.3px;top:440.18px;color:#000">Food</div>
<div class="t mx mc" style="left:138.3px;top:440.18px;color:#000">Hot</div>
<div class="t caps" style="left:254px;top:440.18px;color:#000">MUSHROOM GRAVY</div>
<div class="a" style="left:562.5px;top:15px;width:12.5px;height:436px;background:linear-gradient(90deg,#f3f4f6,#f1f2f4 50%,#e9ebee)"></div>
<div class="a" style="left:564.7px;top:19px;width:0;height:0;border-left:3.8px solid transparent;border-right:3.8px solid transparent;border-bottom:4.4px solid #46567a"></div>
<div class="a" style="left:562.5px;top:29px;width:12.5px;height:13.8px;border:1px solid #8d9aad;border-radius:2.5px;background:linear-gradient(90deg,#bfcad9,#f4f6f9 45%,#e9edf2 60%,#c9d2de)"></div>
<div class="a" style="left:566px;top:33.5px;width:5.5px;height:1px;background:#9aa6b8"></div>
<div class="a" style="left:566px;top:36px;width:5.5px;height:1px;background:#3f4c63"></div>
<div class="a" style="left:566px;top:38px;width:5.5px;height:1px;background:#3f4c63"></div>
<div class="a" style="left:565.2px;top:440px;width:0;height:0;border-left:3.8px solid transparent;border-right:3.8px solid transparent;border-top:4px solid #46567a"></div>
</div>
<div class="a" style="left:441px;top:64px;width:3px;height:492px;background:#eaf1fb"></div>
<div class="grip" style="left:441.8px;top:303px;height:14px"></div>
<div class="a" style="left:1021px;top:121px;width:1.6px;height:434px;background:linear-gradient(90deg,#e8eaed,#f3f4f6)"></div>
<div class="a" style="left:1021px;top:555px;width:3px;height:1px;background:#86aadd"></div>
<div class="a" style="left:0;top:556px;width:1024px;height:27px;background:linear-gradient(#c3d4ea 0 1px,#fafcfe 1px 2px,#b5cbe8 2px 3px,#d9dfe7 3px 5px,#dfecfc 5px,#d0e3fb 9px,#b4d2fa 10px,#b2d1fa 25px,#cad4df 25px)"></div>
<div class="a" style="left:94.3px;top:560px;width:1.4px;height:22.5px;background:#c6cad0"></div>
<div class="a" style="left:272.2px;top:560px;width:1.4px;height:22.5px;background:#c6cad0"></div>
<div class="a" style="left:546.8px;top:560px;width:1.4px;height:22.5px;background:#c6cad0"></div>
<div class="a" style="left:821.4px;top:560px;width:1.4px;height:22.5px;background:#c6cad0"></div>
<div class="t" style="left:3.3px;top:566.8px;font-size:9px;color:#1c3570">User: PRIME Support</div>
<div class="t" style="left:99px;top:566.8px;font-size:9.27px;color:#1c3570">Powered by PRIME Services Technology</div>
<div class="t" style="left:825.8px;top:566.6px;font-size:10.2px;color:#1c3570;transform:scaleX(0.92);transform-origin:0 0">Monday, September 10, 2018</div>
<div class="t" style="left:951px;top:566px;font-size:12.4px;color:#1c3570">10:58:27 AM</div>
</body></html>
